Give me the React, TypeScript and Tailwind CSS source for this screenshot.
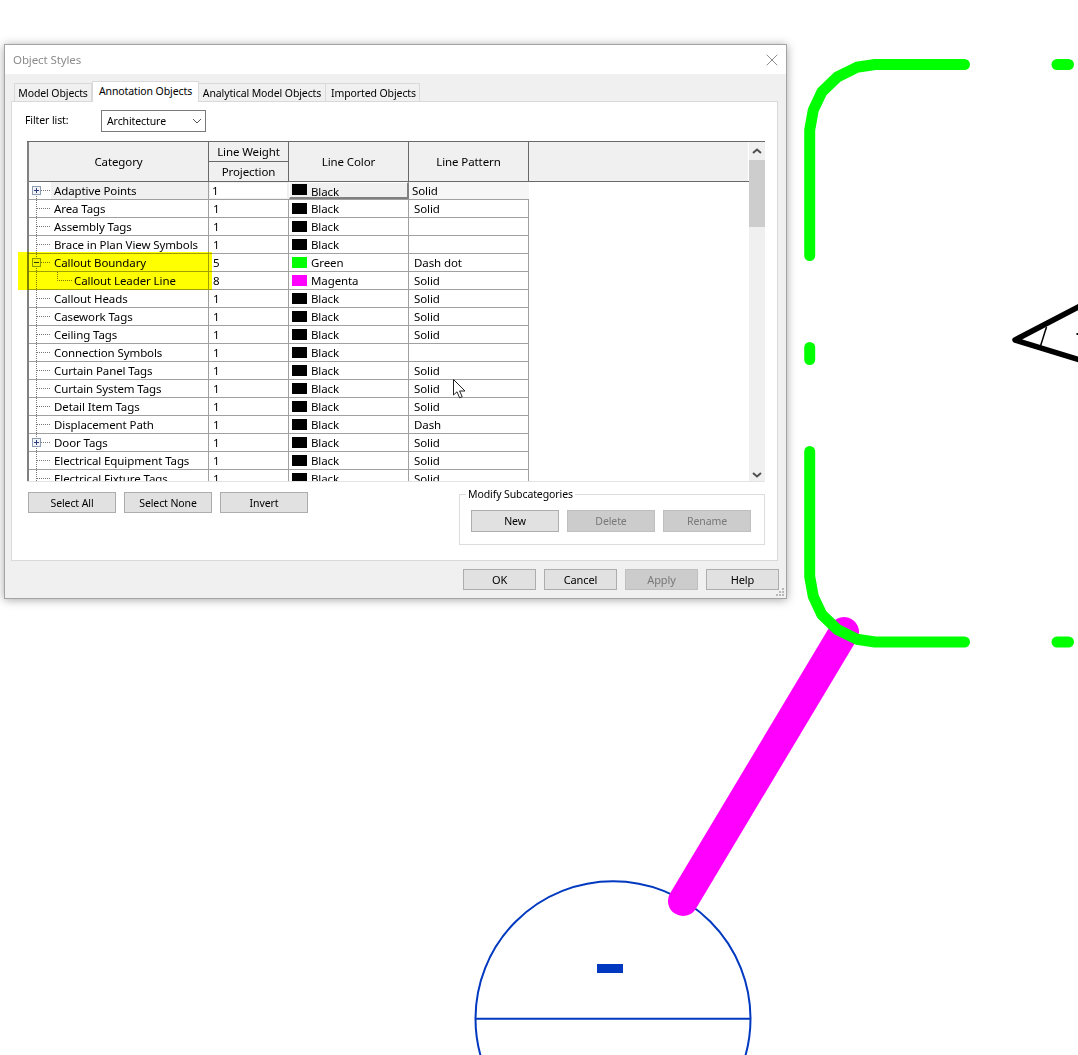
import { X } from 'lucide-react';

type Row = {
  name: string;
  weight: string;
  color: 'Black' | 'Green' | 'Magenta';
  pattern: string;
  tree?: 'plus' | 'minus' | 'child';
};

const rows: Row[] = [
  { name: 'Adaptive Points', weight: '1', color: 'Black', pattern: 'Solid', tree: 'plus' },
  { name: 'Area Tags', weight: '1', color: 'Black', pattern: 'Solid' },
  { name: 'Assembly Tags', weight: '1', color: 'Black', pattern: '' },
  { name: 'Brace in Plan View Symbols', weight: '1', color: 'Black', pattern: '' },
  { name: 'Callout Boundary', weight: '5', color: 'Green', pattern: 'Dash dot', tree: 'minus' },
  { name: 'Callout Leader Line', weight: '8', color: 'Magenta', pattern: 'Solid', tree: 'child' },
  { name: 'Callout Heads', weight: '1', color: 'Black', pattern: 'Solid' },
  { name: 'Casework Tags', weight: '1', color: 'Black', pattern: 'Solid' },
  { name: 'Ceiling Tags', weight: '1', color: 'Black', pattern: 'Solid' },
  { name: 'Connection Symbols', weight: '1', color: 'Black', pattern: '' },
  { name: 'Curtain Panel Tags', weight: '1', color: 'Black', pattern: 'Solid' },
  { name: 'Curtain System Tags', weight: '1', color: 'Black', pattern: 'Solid' },
  { name: 'Detail Item Tags', weight: '1', color: 'Black', pattern: 'Solid' },
  { name: 'Displacement Path', weight: '1', color: 'Black', pattern: 'Dash' },
  { name: 'Door Tags', weight: '1', color: 'Black', pattern: 'Solid', tree: 'plus' },
  { name: 'Electrical Equipment Tags', weight: '1', color: 'Black', pattern: 'Solid' },
  { name: 'Electrical Fixture Tags', weight: '1', color: 'Black', pattern: 'Solid' },
];

const swatch = {
  Black: 'bg-black',
  Green: 'bg-[#00ff00]',
  Magenta: 'bg-[#ff00ff]',
};

function Scene() {
  return (
    <svg className="absolute inset-0" width={1078} height={1055} viewBox="0 0 1078 1055" fill="none">
      <circle cx={613} cy={1018.7} r={137.5} stroke="#0039c0" strokeWidth={2} />
      <path d="M475 1018.7H751" stroke="#0039c0" strokeWidth={2} />
      <rect x={597} y={964} width={26} height={9} fill="#0039c0" />
      <path d="M683 901L844 632" stroke="#ff00ff" strokeWidth={30} strokeLinecap="round" />
      {/* the view draws its curves as short straight runs */}
      <g stroke="#00ff00" strokeWidth={11} strokeLinecap="round" strokeLinejoin="round">
        <path d="M964.5 64.5H875L856.7 67.3L837.3 77L822 91.7L813.3 110L809.7 130V255.5" />
        <path d="M1057 64.5H1068.5" />
        <path d="M809.7 347.5V359.5" />
        <path d="M809.7 451.5V576.5L813.3 596.5L822 614.8L837.3 629.5L856.7 639.2L875 642H964.5" />
        <path d="M1057 642H1068.5" />
      </g>
      <path d="M1080 306L1015 340L1080 360" stroke="#000" strokeWidth={5.5} strokeLinejoin="round" />
      <path d="M1046.5 327L1040.5 346" stroke="#000" strokeWidth={1.5} />
      <path d="M1076.5 334H1078" stroke="#000" strokeWidth={2} />
    </svg>
  );
}

function TreeGlyph({ tree, first }: { tree?: Row['tree']; first: boolean }) {
  return (
    <svg className="shrink-0" width={tree === 'child' ? 45 : 25} height={17} fill="none">
      <path d={first ? 'M7.5 12V17' : 'M7.5 0V17'} stroke="#777" strokeDasharray="1 1" />
      {tree === 'child' ? (
        <path d="M28.5 0V8.5H44" stroke="#777" strokeDasharray="1 1" />
      ) : (
        <path d="M8 8.5H22" stroke="#777" strokeDasharray="1 1" />
      )}
      {(tree === 'plus' || tree === 'minus') && (
        <>
          <rect x={3.5} y={4.5} width={8} height={8} fill="#f4f4f8" stroke="#8d9bb0" />
          <path d="M5 8.5H10" stroke="#2b3c7a" />
          {tree === 'plus' && <path d="M7.5 6V11" stroke="#2b3c7a" />}
        </>
      )}
    </svg>
  );
}

function TableRow({ row, first }: { row: Row; first: boolean }) {
  return (
    <div className="grid h-[18px] grid-cols-[180px_80px_120px_120px] leading-[17px]">
      <div className="flex h-[18px] items-start overflow-hidden border-r border-b border-[#a0a0a0]">
        <TreeGlyph tree={row.tree} first={first} />
        <span className={first ? '-ml-[3px] w-full whitespace-nowrap bg-[#f0f0f0] pl-[3px]' : 'whitespace-nowrap'}>{row.name}</span>
      </div>
      {first ? (
        <div className="border-b border-[#a0a0a0] bg-[#f0f0f0] px-px pt-px">
          <div className="h-[15px] w-[77px] bg-white pl-[2px] leading-[15px]">{row.weight}</div>
        </div>
      ) : (
        <div className="border-r border-b border-[#a0a0a0] pl-[4px]">{row.weight}</div>
      )}
      {first ? (
        <div className="border-b border-[#a0a0a0]">
          <div className="flex h-[17px] items-start gap-[4px] border-t border-l border-r-2 border-b-2 border-t-white border-l-white border-r-[#808080] border-b-[#808080] bg-[#f0f0f0] pl-[2px]">
            <span className={`mt-[1px] h-[11px] w-[15px] shrink-0 ${swatch[row.color]}`} />
            <span className="leading-[17px]">{row.color}</span>
          </div>
        </div>
      ) : (
        <div className="flex items-start gap-[4px] border-r border-b border-[#a0a0a0] pl-[3px]">
          <span className={`mt-[3px] h-[11px] w-[15px] shrink-0 ${swatch[row.color]}`} />
          <span>{row.color}</span>
        </div>
      )}
      <div className={first ? 'border-b border-[#a0a0a0] bg-[#f6f6f6] pl-[3px]' : 'border-r border-b border-[#a0a0a0] pl-[5px]'}>
        {row.pattern}
      </div>
    </div>
  );
}

function Chevron({ d, className }: { d: string; className?: string }) {
  return (
    <svg className={className} width={10} height={6} viewBox="0 0 10 6" fill="none">
      <path d={d} stroke="#505050" strokeWidth={2} />
    </svg>
  );
}

function ObjectTable() {
  return (
    <div className="ml-[15px] mt-[9px] flex h-[341px] w-[738px] border-t border-b border-t-[#696969] border-b-[#e3e3e3]">
      <div className="h-full w-[722px] overflow-hidden border-l-2 border-[#808080]">
        <div className="grid h-[40px] grid-cols-[180px_80px_120px_120px_1fr] border-b border-[#696969] bg-[#f0f0f0]">
          <div className="flex items-center justify-center border-r border-[#696969]">Category</div>
          <div className="flex flex-col border-r border-[#696969]">
            <div className="flex h-[20px] items-center justify-center border-b border-[#696969]">Line Weight</div>
            <div className="flex flex-1 items-center justify-center">Projection</div>
          </div>
          <div className="flex items-center justify-center border-r border-[#696969]">Line Color</div>
          <div className="flex items-center justify-center border-r border-[#696969]">Line Pattern</div>
          <div className="border-r border-white" />
        </div>
        {rows.map((row, i) => (
          <TableRow key={row.name} row={row} first={i === 0} />
        ))}
      </div>
      <div className="flex h-full w-[16px] flex-col bg-[#f0f0f0]">
        <div className="flex h-[18px] items-center justify-center">
          <Chevron d="M1 5L5 1.5L9 5" />
        </div>
        <div className="h-[67px] bg-[#cdcdcd]" />
        <div className="flex flex-1 items-end justify-center pb-[3px]">
          <Chevron d="M1 1L5 4.5L9 1" />
        </div>
      </div>
    </div>
  );
}

function Btn({ label, disabled, className }: { label: string; disabled?: boolean; className: string }) {
  return (
    <button
      type="button"
      className={`${className} flex items-center justify-center border ${
        disabled ? 'border-[#bfbfbf] bg-[#cccccc] text-[#787878]' : 'border-[#adadad] bg-[#e1e1e1] text-black'
      }`}
    >
      {label}
    </button>
  );
}

function Dialog() {
  return (
    <div className="absolute left-[4px] top-[44px] flex h-[555px] w-[783px] flex-col border border-[#a3a3a3] bg-[#f0f0f0] shadow-[0_1px_9px_rgba(0,0,0,0.35)]">
      <div className="flex h-[29px] shrink-0 items-center justify-between bg-white pl-[8px] pr-[4px] text-[#8c8c8c]">
        <span>Object Styles</span>
        <X className="h-[20px] w-[20px] text-[#808080]" strokeWidth={1.1} />
      </div>
      <div className="flex h-[27px] shrink-0 items-end whitespace-nowrap pl-[9px] text-[10.5px]">
        <div className="flex h-[18px] w-[78px] items-center justify-center border border-b-0 border-[#d9d9d9] pt-[2px]">Model Objects</div>
        <div className="relative z-10 -mb-px flex h-[21px] w-[107px] items-start justify-center border border-b-0 border-[#d9d9d9] bg-white pt-[2px]">
          Annotation Objects
        </div>
        <div className="flex h-[18px] w-[127px] items-center justify-center border border-b-0 border-l-0 border-[#d9d9d9] pt-[2px]">
          Analytical Model Objects
        </div>
        <div className="flex h-[18px] w-[94px] items-center justify-center border border-b-0 border-l-0 border-[#d9d9d9] pl-[2px] pt-[2px]">
          Imported Objects
        </div>
      </div>
      <div className="ml-[6px] h-[460px] w-[767px] shrink-0 border border-[#d9d9d9] bg-white">
        <div className="flex items-start pl-[13px] pt-[8px] text-[10.5px]">
          <span className="w-[76px] leading-[21px]">Filter list:</span>
          <div className="flex h-[22px] w-[105px] items-center justify-between border border-[#7a7a7a] pl-[5px] pr-[3px]">
            <span className="pt-[2px]">Architecture</span>
            <svg width={10} height={6} viewBox="0 0 10 6" fill="none">
              <path d="M1 1L5 5L9 1" stroke="#555" />
            </svg>
          </div>
        </div>
        <ObjectTable />
        <div className="ml-[16px] mt-[4px] flex w-[737px] items-start justify-between text-[10.5px]">
          <div className="mt-[6px] flex gap-[8px]">
            <Btn label="Select All" className="h-[21px] w-[88px] pt-[2px]" />
            <Btn label="Select None" className="h-[21px] w-[88px] pt-[2px]" />
            <Btn label="Invert" className="h-[21px] w-[88px] pt-[2px]" />
          </div>
          <fieldset className="h-[59px] w-[306px] border border-[#dcdcdc] px-[11px]">
            <legend className="ml-[-5px] h-[16px] px-[2px] leading-[16px]">Modify Subcategories</legend>
            <div className="mt-[8px] flex gap-[8px]">
              <Btn label="New" className="h-[22px] w-[88px] pt-[1px]" />
              <Btn label="Delete" disabled className="h-[22px] w-[88px] pt-[1px]" />
              <Btn label="Rename" disabled className="h-[22px] w-[88px] pt-[1px]" />
            </div>
          </fieldset>
        </div>
      </div>
      <div className="mt-[8px] flex justify-end gap-[8px] pr-[7px] text-[11px]">
        <Btn label="OK" className="h-[21px] w-[73px] pt-[1px]" />
        <Btn label="Cancel" className="h-[21px] w-[73px] pt-[1px]" />
        <Btn label="Apply" disabled className="h-[21px] w-[73px] pt-[1px]" />
        <Btn label="Help" className="h-[21px] w-[73px] pt-[1px]" />
      </div>
      <svg className="absolute bottom-[1px] right-[1px]" width={10} height={10} fill="#b8b8b8">
        <rect x={7} y={1} width={2} height={2} />
        <rect x={4} y={4} width={2} height={2} />
        <rect x={7} y={4} width={2} height={2} />
        <rect x={1} y={7} width={2} height={2} />
        <rect x={4} y={7} width={2} height={2} />
        <rect x={7} y={7} width={2} height={2} />
      </svg>
    </div>
  );
}

export default function App() {
  return (
    <div className="relative h-[1055px] w-[1078px] overflow-hidden bg-white font-['Noto_Sans',sans-serif] text-[11.5px] tracking-[-0.1px] text-black">
      <Scene />
      <Dialog />
      {/* highlighter stroke over the two callout rows */}
      <div className="absolute left-[18px] top-[252px] h-[38px] w-[194px] bg-[#ffff00] mix-blend-multiply" />
      {/* mouse pointer */}
      <svg className="absolute left-[452px] top-[378px]" width={16} height={22} fill="none">
        <path d="M1.5 1.5V17L5 13.8L7.6 19.8L10.2 18.7L7.6 13H13L1.5 1.5Z" fill="#fff" stroke="#222" />
      </svg>
    </div>
  );
}
